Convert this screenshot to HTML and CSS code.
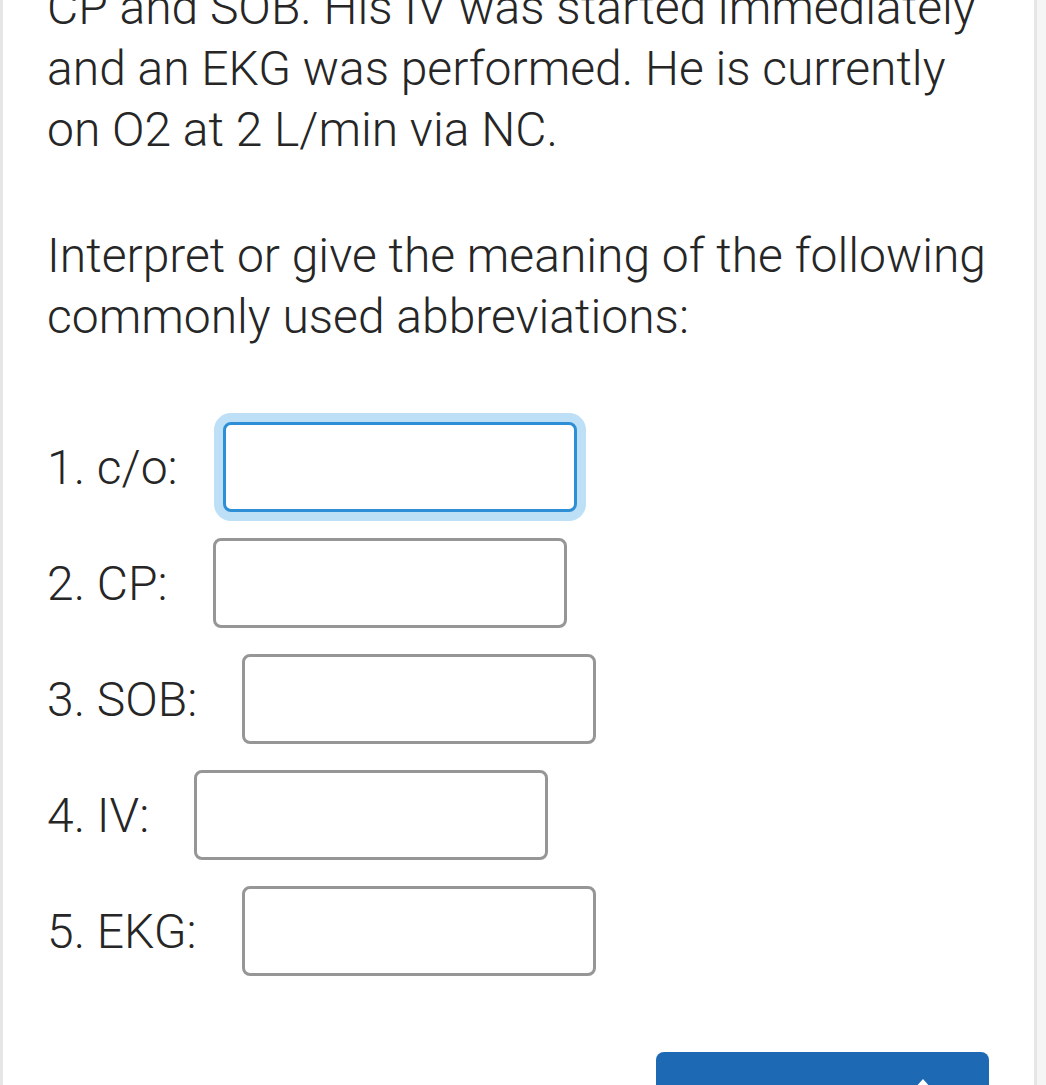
FILE: index.html
```html
<!DOCTYPE html>
<html lang="en">
<head>
<meta charset="utf-8">
<title>Abbreviations</title>
<link rel="stylesheet" href="styles.css">
</head>
<body>
<div class="card">
  <p class="para para-first">CP and SOB. His IV was started immediately<br>and an EKG was performed. He is currently<br>on O2 at 2 L/min via NC.</p>
  <p class="para">Interpret or give the meaning of the following<br>commonly used abbreviations:</p>
  <div class="rows">
    <div class="row"><span class="label">1. c/o:</span><input class="field field-focus" type="text"></div>
    <div class="row"><span class="label">2. CP:</span><input class="field" type="text"></div>
    <div class="row"><span class="label">3. SOB:</span><input class="field" type="text"></div>
    <div class="row"><span class="label">4. IV:</span><input class="field" type="text"></div>
    <div class="row"><span class="label">5. EKG:</span><input class="field" type="text"></div>
  </div>
  <div class="actions">
    <div class="btn">
      <svg class="btn-icon" width="16" height="10" viewBox="0 0 16 10"><path d="M8 0 L16 9 L0 9 Z" fill="#ffffff"/></svg>
    </div>
  </div>
</div>
</body>
</html>
```

FILE: styles.css
```css
html, body {
  margin: 0;
  padding: 0;
  overflow: hidden;
  height: 1085px;
  background: #f5f5f5;
}

.card {
  width: 942px;
  height: 1085px;
  background: #ffffff;
  border-left: 3px solid #e6e6e6;
  border-right: 3px solid #e6e6e6;
  padding: 0 45px 0 44px;
  font-family: Roboto, "Noto Sans", sans-serif;
  font-size: 48px;
  font-weight: 300;
  line-height: 61px;
  color: #262626;
  overflow: hidden;
}

.para {
  margin: 0;
  white-space: nowrap;
}

.para-first {
  margin-top: -23px;
  margin-bottom: 65px;
}

.rows {
  display: flex;
  flex-direction: column;
  gap: 26px;
  margin-top: 75px;
}

.row {
  display: flex;
  align-items: center;
  gap: 45px;
  height: 90px;
}

.label {
  white-space: nowrap;
}

.field {
  box-sizing: border-box;
  width: 354px;
  height: 90px;
  margin: 0;
  border: 3px solid #969696;
  border-radius: 8px;
  background: #ffffff;
  outline: none;
  font-family: Roboto, sans-serif;
  font-size: 40px;
}

.field-focus {
  border-color: #2f8fd6;
  box-shadow: 0 0 0 9px #bde0f7;
}

.actions {
  display: flex;
  justify-content: flex-end;
  margin-top: 76px;
}

.btn {
  box-sizing: border-box;
  width: 333px;
  height: 70px;
  border-radius: 8px;
  background: #1d69b4;
  display: flex;
  justify-content: flex-end;
  align-items: flex-start;
  padding: 27px 58px 0 0;
}

.btn-icon {
  display: block;
}
```
